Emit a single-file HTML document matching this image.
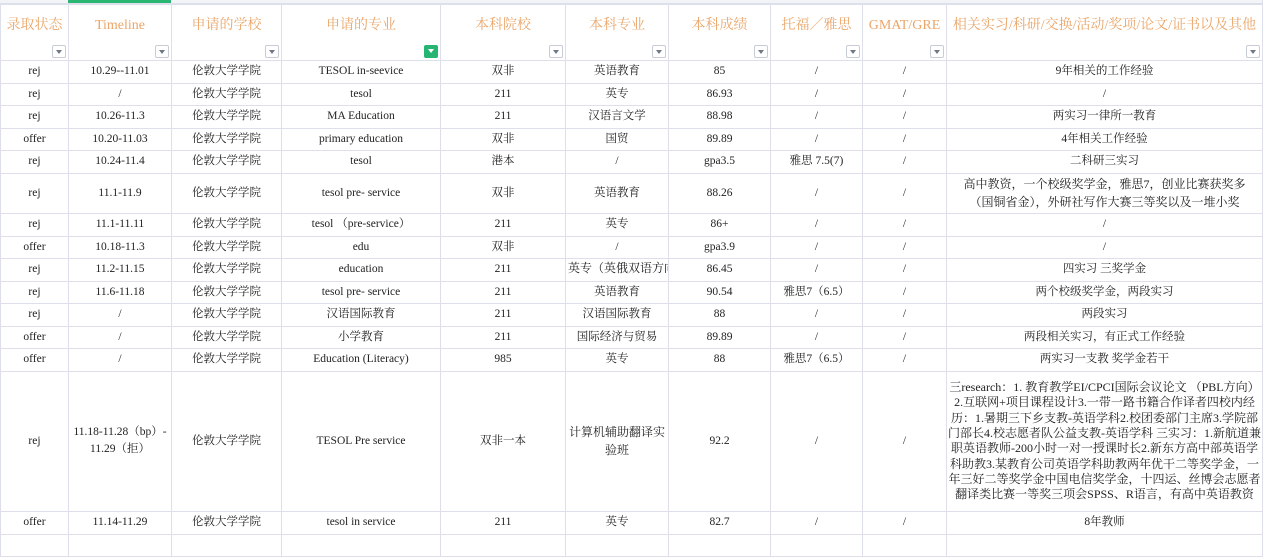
<!DOCTYPE html>
<html><head><meta charset="utf-8"><style>
*{margin:0;padding:0;box-sizing:border-box}
body{width:1266px;height:537px;overflow:hidden;background:#fff;font-family:"Liberation Serif","Noto Serif CJK SC",serif;color:#222}
.top{position:absolute;left:0;top:0;width:1266px;height:4px;background:#f3f4f7;border-bottom:1px solid #dde0ea}
.sel{position:absolute;left:68px;top:0;width:103px;height:3px;background:#2bb673}
table{position:absolute;left:0;top:4px;border-collapse:collapse;table-layout:fixed;width:1262px}
td{border:1px solid #dde0ea;text-align:center;vertical-align:middle;font-size:11.5px;line-height:15px;overflow:hidden;padding:0 2px;white-space:nowrap}
td.w{white-space:normal}
tr.h td{height:56px;color:#eaa66a;font-size:14px;position:relative;padding-bottom:14px}
.f{position:absolute;right:2px;bottom:2px;width:14px;height:13px;border:1px solid #c8ccd6;border-radius:2px;background:#fff}
.f:after{content:"";position:absolute;left:3px;top:4px;border-left:3.5px solid transparent;border-right:3.5px solid transparent;border-top:4px solid #707888}
.g{background:#26b573;border-color:#26b573}
.g:after{border-top-color:#fff;top:3px}
tr td{height:22.5px}
.r{position:absolute;left:1262px;top:0;width:4px;height:537px;border-left:1px solid #dde0ea;background:#fff}
</style></head><body>
<div class="top"></div><div class="sel"></div>
<table>
<colgroup><col style="width:68px"><col style="width:103px"><col style="width:110px"><col style="width:159px"><col style="width:125px"><col style="width:103px"><col style="width:102px"><col style="width:92px"><col style="width:84px"><col style="width:316px"></colgroup>
<tr class="h"><td>录取状态<span class="f"></span></td><td>Timeline<span class="f"></span></td><td>申请的学校<span class="f"></span></td><td>申请的专业<span class="f g"></span></td><td>本科院校<span class="f"></span></td><td>本科专业<span class="f"></span></td><td>本科成绩<span class="f"></span></td><td>托福／雅思<span class="f"></span></td><td>GMAT/GRE<span class="f"></span></td><td>相关实习/科研/交换/活动/奖项/论文/证书以及其他<span class="f"></span></td></tr>
<tr><td>rej</td><td>10.29--11.01</td><td>伦敦大学学院</td><td>TESOL in-seevice</td><td>双非</td><td>英语教育</td><td>85</td><td>/</td><td>/</td><td>9年相关的工作经验</td></tr>
<tr><td>rej</td><td>/</td><td>伦敦大学学院</td><td>tesol</td><td>211</td><td>英专</td><td>86.93</td><td>/</td><td>/</td><td>/</td></tr>
<tr><td>rej</td><td>10.26-11.3</td><td>伦敦大学学院</td><td>MA Education</td><td>211</td><td>汉语言文学</td><td>88.98</td><td>/</td><td>/</td><td>两实习一律所一教育</td></tr>
<tr><td>offer</td><td>10.20-11.03</td><td>伦敦大学学院</td><td>primary education</td><td>双非</td><td>国贸</td><td>89.89</td><td>/</td><td>/</td><td>4年相关工作经验</td></tr>
<tr><td>rej</td><td>10.24-11.4</td><td>伦敦大学学院</td><td>tesol</td><td>港本</td><td>/</td><td>gpa3.5</td><td>雅思 7.5(7)</td><td>/</td><td>二科研三实习</td></tr>
<tr><td style="height:40.5px">rej</td><td>11.1-11.9</td><td>伦敦大学学院</td><td>tesol pre- service</td><td>双非</td><td>英语教育</td><td>88.26</td><td>/</td><td>/</td><td class="w" style="line-height:18px;font-size:12px;padding:0 8px">高中教资，一个校级奖学金，雅思7，创业比赛获奖多（国铜省金），外研社写作大赛三等奖以及一堆小奖</td></tr>
<tr><td>rej</td><td>11.1-11.11</td><td>伦敦大学学院</td><td>tesol （pre-service）</td><td>211</td><td>英专</td><td>86+</td><td>/</td><td>/</td><td>/</td></tr>
<tr><td>offer</td><td>10.18-11.3</td><td>伦敦大学学院</td><td>edu</td><td>双非</td><td>/</td><td>gpa3.9</td><td>/</td><td>/</td><td>/</td></tr>
<tr><td>rej</td><td>11.2-11.15</td><td>伦敦大学学院</td><td>education</td><td>211</td><td style="vertical-align:top;padding-top:2px;font-size:12px">英专（英俄双语方向）</td><td>86.45</td><td>/</td><td>/</td><td>四实习 三奖学金</td></tr>
<tr><td>rej</td><td>11.6-11.18</td><td>伦敦大学学院</td><td>tesol pre- service</td><td>211</td><td>英语教育</td><td>90.54</td><td>雅思7（6.5）</td><td>/</td><td>两个校级奖学金，两段实习</td></tr>
<tr><td>rej</td><td>/</td><td>伦敦大学学院</td><td>汉语国际教育</td><td>211</td><td>汉语国际教育</td><td>88</td><td>/</td><td>/</td><td>两段实习</td></tr>
<tr><td>offer</td><td>/</td><td>伦敦大学学院</td><td>小学教育</td><td>211</td><td>国际经济与贸易</td><td>89.89</td><td>/</td><td>/</td><td>两段相关实习，有正式工作经验</td></tr>
<tr><td>offer</td><td>/</td><td>伦敦大学学院</td><td>Education (Literacy)</td><td>985</td><td>英专</td><td>88</td><td>雅思7（6.5）</td><td>/</td><td>两实习一支教 奖学金若干</td></tr>
<tr><td style="height:140.5px">rej</td><td style="line-height:17px">11.18-11.28（bp）-<br>11.29（拒）</td><td>伦敦大学学院</td><td>TESOL Pre service</td><td>双非一本</td><td class="w" style="font-size:12px;line-height:18px">计算机辅助翻译实验班</td><td>92.2</td><td>/</td><td>/</td><td class="w" style="line-height:15.3px;font-size:12px;padding:0 1px">三research：1. 教育教学EI/CPCI国际会议论文 （PBL方向）2.互联网+项目课程设计3.一带一路书籍合作译者四校内经历：1.暑期三下乡支教-英语学科2.校团委部门主席3.学院部门部长4.校志愿者队公益支教-英语学科 三实习：1.新航道兼职英语教师-200小时一对一授课时长2.新东方高中部英语学科助教3.某教育公司英语学科助教两年优干二等奖学金，一年三好二等奖学金中国电信奖学金，十四运、丝博会志愿者翻译类比赛一等奖三项会SPSS、R语言，有高中英语教资</td></tr>
<tr><td>offer</td><td>11.14-11.29</td><td>伦敦大学学院</td><td>tesol in service</td><td>211</td><td>英专</td><td>82.7</td><td>/</td><td>/</td><td>8年教师</td></tr>
<tr><td></td><td></td><td></td><td></td><td></td><td></td><td></td><td></td><td></td><td></td></tr>
</table>
<div class="r"></div>
</body></html>
